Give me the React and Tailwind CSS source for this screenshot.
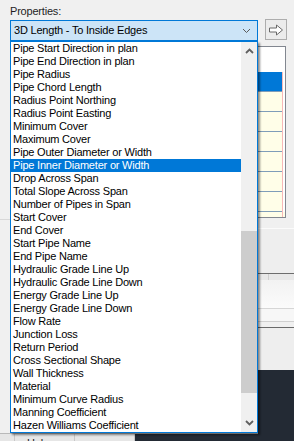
import { useState } from 'react';

const items = [
  'Pipe Start Direction in plan',
  'Pipe End Direction in plan',
  'Pipe Radius',
  'Pipe Chord Length',
  'Radius Point Northing',
  'Radius Point Easting',
  'Minimum Cover',
  'Maximum Cover',
  'Pipe Outer Diameter or Width',
  'Pipe Inner Diameter or Width',
  'Drop Across Span',
  'Total Slope Across Span',
  'Number of Pipes in Span',
  'Start Cover',
  'End Cover',
  'Start Pipe Name',
  'End Pipe Name',
  'Hydraulic Grade Line Up',
  'Hydraulic Grade Line Down',
  'Energy Grade Line Up',
  'Energy Grade Line Down',
  'Flow Rate',
  'Junction Loss',
  'Return Period',
  'Cross Sectional Shape',
  'Wall Thickness',
  'Material',
  'Minimum Curve Radius',
  'Manning Coefficient',
  'Hazen Williams Coefficient',
];

const Chevron = ({ up = false }) => (
  <svg width="9" height="6" viewBox="0 0 9 6" className={up ? 'rotate-180' : ''}>
    <path d="M1 1 L4.5 4.5 L8 1" fill="none" stroke="#606060" strokeWidth="1.8" />
  </svg>
);

const App = () => {
  const [selected, setSelected] = useState(9);

  return (
    <div className="relative w-[294px] h-[441px] overflow-hidden bg-[#f0f0f0] text-black text-[11px] leading-[13px] tracking-[-0.2px] font-['Liberation_Sans',Arial,sans-serif]">
      {/* Dialog behind the popup */}
      <div className="flex flex-col h-full">
        <div className="pl-[10px] pt-[5px] h-[19px] text-[#1e1e1e]">Properties:</div>

        <div className="flex items-start pl-[10px] h-[22px]">
          <div className="w-[248px] h-[21px] mt-[1px] flex items-center justify-between pl-[3px] pr-[6px] bg-[#cce4f7] border border-[#0078d7]">
            <span>3D Length - To Inside Edges</span>
            <svg width="9" height="6" viewBox="0 0 9 6">
              <path d="M1 1 L4.5 4.5 L8 1" fill="none" stroke="#5a5a5a" strokeWidth="1" />
            </svg>
          </div>
          <button className="ml-[7px] w-[22px] h-[21px] flex items-center justify-center bg-[#ececec] border border-[#adadad]">
            <svg width="16" height="12" viewBox="0 0 16 12">
              <path d="M1.5 4 H8.5 V1 L14.5 6 L8.5 11 V8 H1.5 Z" fill="#fff" stroke="#6a6a6a" strokeWidth="1" />
            </svg>
          </button>
        </div>

        <div className="flex flex-1">
          {/* left column under the popup */}
          <div className="w-[258px] flex flex-col">
            <div className="h-[178px]" />
            <div className="h-[1px] bg-[#d8d8d8]" />
            <div className="flex-1" />
            <div className="h-[8px] flex bg-[#e6e6e6] border-t border-[#b9b9b9] overflow-hidden">
              <div className="w-[15px] border-r border-[#c8c8c8]" />
              <div className="w-[60px] border-r border-[#c8c8c8] pl-[12px] pt-[3px] text-[#222] leading-[12px]">Help</div>
              <div className="w-[60px] border-r border-[#c8c8c8]" />
              <div className="flex-1 bg-[#232a34]" />
            </div>
          </div>

          {/* right column: grid panel */}
          <div className="flex-1 flex flex-col">
            <div className="mt-[5px] w-[28px] h-[172px] flex flex-col bg-white border border-l-0 border-[#828790]">
              <div className="h-[25px] bg-white" />
              <div className="h-[20px] bg-[#0078d7] mr-[3px] border-b border-[#7f9db9]" />
              {[0, 1, 2, 3, 4, 5].map((r) => (
                <div key={r} className="h-[20px] bg-[#fffee8] border-b border-[#7f9db9] mr-[2px]" />
              ))}
              <div className="flex-1 bg-[#fffee8]" />
            </div>
            <div className="h-[10px]" />
            <div className="h-[1px] bg-[#fbfbfb]" />
            <div className="h-[44px] bg-[#eeeeee]" />
            <div className="h-[1px] bg-[#6d6d6d]" />
            <div className="h-[6px] flex bg-[#e8e8e8]">
              <div className="w-[11px] border-r border-[#cfcfcf]" />
            </div>
            <div className="h-[28px] bg-gradient-to-b from-[#f2f2f2] to-[#fbfbfb]" />
            <div className="h-[1px] bg-[#d6d6d6]" />
            <div className="h-[12px] bg-[#f7f7f7]" />
            <div className="h-[1px] bg-[#d0d0d0]" />
            <div className="h-[5px] bg-[#f0f0f0]" />
            <div className="h-[1px] bg-[#6a6a6a]" />
            <div className="h-[42px] bg-[#eeeeee]" />
            <div className="flex-1 bg-[#232a34]" />
          </div>
        </div>
      </div>

      {/* Pink column line in the grid */}
      <div className="absolute left-[282px] top-[72px] w-[1px] h-[145px] bg-[#f8b8b8]" />

      {/* Dropdown popup */}
      <div className="absolute left-[10px] top-[41px] w-[248px] h-[392px] flex bg-white border border-[#0078d7] shadow-[2px_2px_2px_rgba(0,0,0,0.45)]">
        <ul className="flex-1 pt-0">
          {items.map((item, i) => (
            <li
              key={item}
              onMouseDown={() => setSelected(i)}
              className={`h-[13px] pl-[2px] whitespace-nowrap overflow-hidden ${
                i === selected ? 'bg-[#0078d7] text-white' : ''
              }`}
            >
              {item}
            </li>
          ))}
        </ul>
        <div className="w-[16px] flex flex-col bg-[#f0f0f0]">
          <div className="h-[17px] flex items-center justify-center">
            <Chevron up />
          </div>
          <div className="h-[172px]" />
          <div className="h-[162px] bg-[#cdcdcd]" />
          <div className="flex-1 flex items-end justify-center pb-[6px]">
            <Chevron />
          </div>
        </div>
      </div>
    </div>
  );
};

export default App;
